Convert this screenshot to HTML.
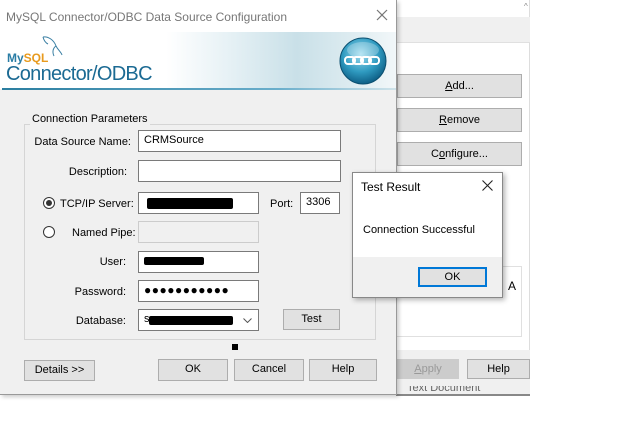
<!DOCTYPE html>
<html><head><style>
*{margin:0;padding:0;box-sizing:border-box}
body{width:628px;height:438px;background:#fff;position:relative;overflow:hidden;font-family:"Liberation Sans",sans-serif;font-size:11px;color:#000}
.a{position:absolute}
.btn{position:absolute;background:#e1e1e1;border:1px solid #adadad;text-align:center;line-height:19px;font-size:11px}
.inp{position:absolute;background:#fff;border:1px solid #7a7a7a;font-size:11px;padding-left:5px;line-height:19px}
.lbl{position:absolute;text-align:right;font-size:11px}
.red{position:absolute;background:#000;height:11px;border-radius:2px}
</style></head><body>
<div class="a" style="left:396px;top:0;width:134px;height:396px;background:#fff;border-right:1px solid #ddd"></div>
<div class="a" style="left:396px;top:17px;width:134px;height:26px;background:#f0f0f0;border-bottom:1px solid #e0e0e0"></div>
<div class="a" style="left:524px;top:2px;font-size:8px;color:#888">^</div>
<div class="btn" style="left:397px;top:74px;width:125px;height:24px;line-height:22px"><u>A</u>dd...</div>
<div class="btn" style="left:397px;top:108px;width:125px;height:24px;line-height:22px"><u>R</u>emove</div>
<div class="btn" style="left:397px;top:142px;width:125px;height:24px;line-height:22px">C<u>o</u>nfigure...</div>
<div class="a" style="left:396px;top:266px;width:126px;height:71px;border:1px solid #e0e0e0"></div>
<div class="a" style="left:508px;top:279px;font-size:12px">A</div>
<div class="a" style="left:396px;top:350px;width:134px;height:36px;background:#f0f0f0"></div>
<div class="btn" style="left:397px;top:359px;width:62px;height:20px;color:#999;background:#ccc;border-color:#ccc"><u>A</u>pply</div>
<div class="btn" style="left:467px;top:359px;width:63px;height:20px">Help</div>
<div class="a" style="left:396px;top:386px;width:134px;height:10px;background:#f0f0f0;overflow:hidden"><div style="position:absolute;left:11px;top:-4px;color:#666;font-size:11px">Text Document</div></div>
<div class="a" style="left:396px;top:394px;width:134px;height:2px;background:#888"></div>

<div class="a" style="left:0;top:0;width:397px;height:395px;background:#f0f0f0;border-right:1px solid #999;border-bottom:1px solid #999;box-shadow:2px 2px 4px rgba(0,0,0,.2)"></div>
<div class="a" style="left:0;top:0;width:396px;height:32px;background:#fff"></div>
<div class="a" style="left:6px;top:10px;font-size:12px;color:#777">MySQL Connector/ODBC Data Source Configuration</div>
<svg class="a" style="left:376px;top:9px" width="12" height="12"><path d="M1 1L11 11M11 1L1 11" stroke="#777" stroke-width="1.2"/></svg>
<div class="a" style="left:0;top:32px;width:396px;height:57px;background:linear-gradient(90deg,#fff 0%,#fff 42%,#e6f1f5 58%,#c9e0e8 75%,#dcebf0 88%,#f2f7f9 100%)"></div>
<div class="a" style="left:2px;top:88px;width:394px;height:2px;background:linear-gradient(90deg,#2b7ea0,#6aaecb 70%,#cfe3ea)"></div>
<svg class="a" style="left:40px;top:34px" width="24" height="26"><path d="M3 3 C8 2 14 6 16 12 C18 16 21 18 22 21 M16 12 C13 14 12 18 14 22 M3 3 C4 7 6 9 8 10" stroke="#3a7fa3" stroke-width="1" fill="none"/></svg>
<div class="a" style="left:7px;top:51px;font-size:12px;color:#2a7da5;font-weight:bold">My<span style="color:#e89a1d">SQL</span></div>
<div class="a" style="left:6px;top:63px;font-size:20px;color:#1b6a93;letter-spacing:-0.7px">Connector/ODBC</div>
<svg class="a" style="left:338px;top:36px" width="50" height="50"><defs><radialGradient id="g" cx="45%" cy="35%" r="65%"><stop offset="0" stop-color="#9fdcef"/><stop offset=".6" stop-color="#2f9ac0"/><stop offset="1" stop-color="#0e5f86"/></radialGradient></defs><circle cx="25" cy="25" r="23" fill="url(#g)" stroke="#0b4f70"/><ellipse cx="25" cy="14" rx="16" ry="8" fill="#fff" opacity=".25"/><g fill="none" stroke="#fff" stroke-width="2"><rect x="7" y="21" width="10" height="7" rx="3"/><rect x="15" y="21" width="10" height="7" rx="3"/><rect x="23" y="21" width="10" height="7" rx="3"/><rect x="31" y="21" width="10" height="7" rx="3"/></g></svg>

<div class="a" style="left:24px;top:124px;width:352px;height:216px;border:1px solid #d5d5d5"></div>
<div class="a" style="left:30px;top:113px;padding:0 2px;background:#f0f0f0">Connection Parameters</div>
<div class="lbl" style="left:20px;top:136px;width:111px">Data Source Name:</div>
<div class="inp" style="left:138px;top:130px;width:203px;height:22px">CRMSource</div>
<div class="lbl" style="left:20px;top:166px;width:107px">Description:</div>
<div class="inp" style="left:138px;top:160px;width:203px;height:22px"></div>
<div class="a" style="left:43px;top:197px;width:12px;height:12px;border:1px solid #333;border-radius:50%;background:#fff"><div style="position:absolute;left:2px;top:2px;width:6px;height:6px;border-radius:50%;background:#333"></div></div>
<div class="a" style="left:60px;top:198px">TCP/IP Server:</div>
<div class="inp" style="left:138px;top:192px;width:121px;height:22px"><div class="red" style="left:8px;top:5px;width:86px"></div></div>
<div class="a" style="left:270px;top:198px">Port:</div>
<div class="inp" style="left:300px;top:192px;width:40px;height:22px">3306</div>
<div class="a" style="left:43px;top:226px;width:12px;height:12px;border:1px solid #333;border-radius:50%;background:#fff"></div>
<div class="a" style="left:72px;top:227px">Named Pipe:</div>
<div class="inp" style="left:138px;top:221px;width:121px;height:22px;background:#f0f0f0;border-color:#ccc"></div>
<div class="lbl" style="left:60px;top:256px;width:66px">User:</div>
<div class="inp" style="left:138px;top:251px;width:121px;height:22px"><div class="red" style="left:5px;top:5px;width:60px;height:8px"></div></div>
<div class="lbl" style="left:60px;top:286px;width:66px">Password:</div>
<div class="inp" style="left:138px;top:280px;width:121px;height:22px;font-size:12px;letter-spacing:0.5px">●●●●●●●●●●●</div>
<div class="lbl" style="left:60px;top:315px;width:66px">Database:</div>
<div class="inp" style="left:138px;top:309px;width:121px;height:22px">s<div class="red" style="left:10px;top:6px;width:84px;height:9px"></div><svg style="position:absolute;right:6px;top:8px" width="9" height="5"><path d="M0.5 0.5L4.5 4.5L8.5 0.5" stroke="#555" fill="none"/></svg></div>
<div class="btn" style="left:283px;top:309px;width:57px;height:21px">Test</div>
<div class="a" style="left:232px;top:344px;width:6px;height:6px;background:#000"></div>
<div class="btn" style="left:24px;top:360px;width:71px;height:21px">Details &gt;&gt;</div>
<div class="btn" style="left:158px;top:359px;width:70px;height:22px">OK</div>
<div class="btn" style="left:234px;top:359px;width:70px;height:22px">Cancel</div>
<div class="btn" style="left:309px;top:359px;width:68px;height:22px">Help</div>

<div class="a" style="left:352px;top:172px;width:151px;height:126px;background:#fff;border:1px solid #888;box-shadow:2px 2px 5px rgba(0,0,0,.3)"></div>
<div class="a" style="left:361px;top:180px;font-size:12px">Test Result</div>
<svg class="a" style="left:482px;top:180px" width="11" height="11"><path d="M0.5 0.5L10.5 10.5M10.5 0.5L0.5 10.5" stroke="#222" stroke-width="1.1"/></svg>
<div class="a" style="left:363px;top:224px">Connection Successful</div>
<div class="a" style="left:353px;top:257px;width:149px;height:40px;background:#f0f0f0"></div>
<div class="btn" style="left:418px;top:267px;width:69px;height:20px;border:2px solid #0078d7;line-height:16px">OK</div>
</body></html>
